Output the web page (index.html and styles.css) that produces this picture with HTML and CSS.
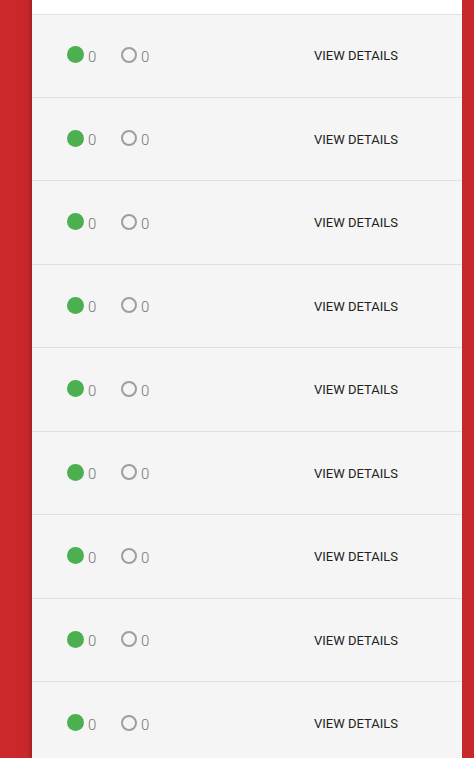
FILE: index.html
```html
<!DOCTYPE html>
<html lang="en">
<head>
  <meta charset="UTF-8">
  <meta name="viewport" content="width=device-width, initial-scale=1.0">
  <title>Results</title>
  <link rel="stylesheet" href="styles.css">
</head>
<body>
  <div class="page">
    <div class="side side-left"></div>
    <div class="panel">
      <div class="panel-top"></div>
      <ul class="list">
        <li class="row"><div class="stats"><span class="stat"><span class="dot dot-on"></span><span class="num">0</span></span><span class="stat"><span class="dot dot-off"></span><span class="num">0</span></span></div><button class="details">View details</button></li>
        <li class="row"><div class="stats"><span class="stat"><span class="dot dot-on"></span><span class="num">0</span></span><span class="stat"><span class="dot dot-off"></span><span class="num">0</span></span></div><button class="details">View details</button></li>
        <li class="row"><div class="stats"><span class="stat"><span class="dot dot-on"></span><span class="num">0</span></span><span class="stat"><span class="dot dot-off"></span><span class="num">0</span></span></div><button class="details">View details</button></li>
        <li class="row"><div class="stats"><span class="stat"><span class="dot dot-on"></span><span class="num">0</span></span><span class="stat"><span class="dot dot-off"></span><span class="num">0</span></span></div><button class="details">View details</button></li>
        <li class="row"><div class="stats"><span class="stat"><span class="dot dot-on"></span><span class="num">0</span></span><span class="stat"><span class="dot dot-off"></span><span class="num">0</span></span></div><button class="details">View details</button></li>
        <li class="row"><div class="stats"><span class="stat"><span class="dot dot-on"></span><span class="num">0</span></span><span class="stat"><span class="dot dot-off"></span><span class="num">0</span></span></div><button class="details">View details</button></li>
        <li class="row"><div class="stats"><span class="stat"><span class="dot dot-on"></span><span class="num">0</span></span><span class="stat"><span class="dot dot-off"></span><span class="num">0</span></span></div><button class="details">View details</button></li>
        <li class="row"><div class="stats"><span class="stat"><span class="dot dot-on"></span><span class="num">0</span></span><span class="stat"><span class="dot dot-off"></span><span class="num">0</span></span></div><button class="details">View details</button></li>
        <li class="row"><div class="stats"><span class="stat"><span class="dot dot-on"></span><span class="num">0</span></span><span class="stat"><span class="dot dot-off"></span><span class="num">0</span></span></div><button class="details">View details</button></li>
      </ul>
    </div>
    <div class="side side-right"></div>
  </div>
</body>
</html>
```

FILE: styles.css
```css
html, body {
  margin: 0;
  padding: 0;
  height: 100%;
  overflow: hidden;
}
body {
  font-family: Roboto, 'Noto Sans', sans-serif;
  background-color: #c8282a;
}
.page {
  display: flex;
  height: 758px;
}
.side {
  background-color: #c8282a;
  flex-shrink: 0;
}
.side-left {
  width: 32px;
  background: linear-gradient(to right, #cc292b 0, #c8282a 27px, #a82022 32px);
}
.side-right {
  width: 12px;
}
.panel {
  width: 430px;
  background-color: #f5f5f5;
  overflow: hidden;
}
.panel-top {
  height: 15px;
  box-sizing: border-box;
  background-color: #fff;
  border-bottom: 1px solid #e0e0e0;
}
.list {
  list-style: none;
  margin: 0;
  padding: 0;
}
.row {
  display: flex;
  align-items: center;
  height: 83.5px;
  box-sizing: border-box;
  border-bottom: 1px solid #e0e0e0;
  padding: 0 64px 0 35px;
  position: relative;
  top: -1px;
}
.stats {
  display: flex;
  gap: 24px;
  margin-top: -1px;
}
.stat {
  display: flex;
  align-items: center;
  gap: 4px;
  width: 30px;
}
.num {
  font-size: 15px;
  font-weight: 300;
  color: #757575;
  margin-top: 4px;
}
.dot {
  width: 16px;
  height: 16px;
  border-radius: 50%;
  box-sizing: border-box;
  flex-shrink: 0;
}
.dot-on {
  width: 17px;
  height: 17px;
  background-color: #4caf50;
}
.dot-off {
  border: 2px solid #9e9e9e;
}
.details {
  margin-left: auto;
  background: none;
  border: none;
  padding: 0;
  margin-top: 1px;
  font-family: Roboto, 'Noto Sans', sans-serif;
  font-size: 13px;
  font-weight: 400;
  text-transform: uppercase;
  color: #222;
  cursor: pointer;
}
```
